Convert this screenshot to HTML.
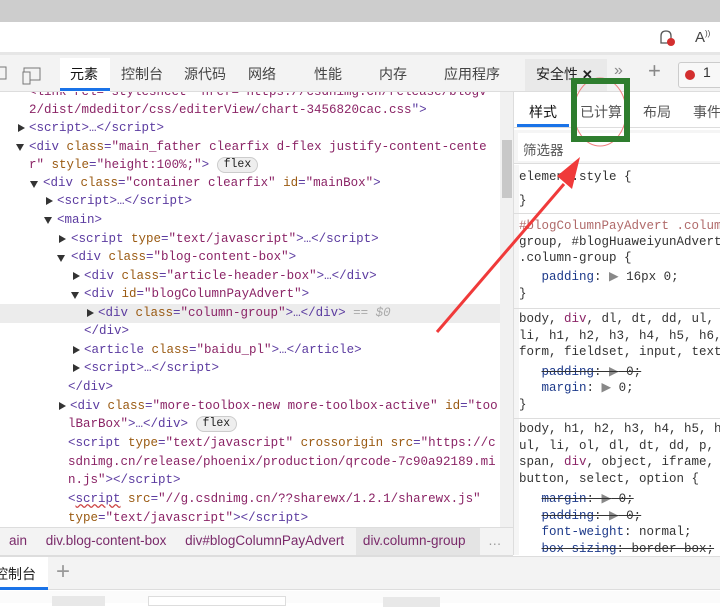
<!DOCTYPE html><html><head><meta charset="utf-8"><style>
*{margin:0;padding:0;box-sizing:border-box}
body{width:720px;height:603px;overflow:hidden;background:#fff;position:relative;font-family:"Liberation Sans","Noto Sans CJK SC",sans-serif}
.a{position:absolute}
.m{font-family:"Liberation Mono","DejaVu Sans Mono",monospace;font-size:12.5px;white-space:pre;line-height:18px}
.t{color:#5b3ba0}.n{color:#9a5a12}.v{color:#8b2466}.g{color:#333}
.tri{position:absolute;width:0;height:0}
.r{border-top:4.5px solid transparent;border-bottom:4.5px solid transparent;border-left:7px solid #333}
.d{border-left:4.5px solid transparent;border-right:4.5px solid transparent;border-top:7px solid #333}
.tab{position:absolute;top:64px;font-size:14px;color:#444;white-space:nowrap}
.pill{display:inline-block;background:#eee;border:1px solid #ccc;border-radius:9px;font-size:11.5px;line-height:14px;padding:0 6px;color:#222;vertical-align:1px}
.rs{position:absolute;left:519px;font-family:"Liberation Mono",monospace;font-size:12.5px;white-space:pre;line-height:16px;color:#333}
.s{text-decoration:line-through}
.p{color:#1d3a8a}
</style></head><body>
<div class="a" style="left:0;top:0;width:720px;height:22px;background:#cdcdcd"></div>
<div class="a" style="left:0;top:22px;width:720px;height:30px;background:#fff"></div>
<div class="a" style="left:0;top:52px;width:720px;height:3px;background:#e6e6e6"></div>
<svg class="a" style="left:656px;top:28px" width="24" height="20"><path d="M5 15 L5 8 Q5 3 10 3 Q15 3 15 8 L15 15 Z" fill="none" stroke="#555" stroke-width="1.3"/><circle cx="15" cy="14" r="4" fill="#d32f2f"/></svg>
<div class="a" style="left:695px;top:29px;font-size:15px;color:#444">A<sup style="font-size:8px">))</sup></div>
<!-- elements panel (clipped) -->
<div class="a" style="left:0;top:92px;width:500px;height:435px;overflow:hidden">
<div class="a" style="left:0;top:0;width:0;height:0">
<div class="a" style="left:0;top:212px;width:500px;height:19px;background:#ececec"></div>
<div class="m a" style="left:29px;top:-9px"><span class="v">&lt;link rel="stylesheet" href="https://csdnimg.cn/release/blogv</span></div>
<div class="m a" style="left:29px;top:9px"><span class="v">2/dist/mdeditor/css/editerView/chart-3456820cac.css</span><span class="t">"&gt;</span></div>
<div class="tri r" style="left:18px;top:32px"></div>
<div class="m a t" style="left:29px;top:27px">&lt;script&gt;…&lt;/script&gt;</div>
<div class="tri d" style="left:16px;top:52px"></div>
<div class="m a" style="left:29px;top:46px"><span class="t">&lt;div </span><span class="n">class</span><span class="t">=</span><span class="v">"main_father clearfix d-flex justify-content-cente</span></div>
<div class="m a" style="left:29px;top:64px"><span class="v">r"</span> <span class="n">style</span><span class="t">=</span><span class="v">"height:100%;"</span><span class="t">&gt;</span> <span class="pill">flex</span></div>
<div class="tri d" style="left:30px;top:89px"></div>
<div class="m a" style="left:43px;top:82px"><span class="t">&lt;div </span><span class="n">class</span><span class="t">=</span><span class="v">"container clearfix"</span> <span class="n">id</span><span class="t">=</span><span class="v">"mainBox"</span><span class="t">&gt;</span></div>
<div class="tri r" style="left:46px;top:105px"></div>
<div class="m a t" style="left:57px;top:100px">&lt;script&gt;…&lt;/script&gt;</div>
<div class="tri d" style="left:44px;top:125px"></div>
<div class="m a t" style="left:57px;top:119px">&lt;main&gt;</div>
<div class="tri r" style="left:59px;top:143px"></div>
<div class="m a" style="left:71px;top:138px"><span class="t">&lt;script </span><span class="n">type</span><span class="t">=</span><span class="v">"text/javascript"</span><span class="t">&gt;…&lt;/script&gt;</span></div>
<div class="tri d" style="left:57px;top:163px"></div>
<div class="m a" style="left:71px;top:156px"><span class="t">&lt;div </span><span class="n">class</span><span class="t">=</span><span class="v">"blog-content-box"</span><span class="t">&gt;</span></div>
<div class="tri r" style="left:73px;top:180px"></div>
<div class="m a" style="left:84px;top:175px"><span class="t">&lt;div </span><span class="n">class</span><span class="t">=</span><span class="v">"article-header-box"</span><span class="t">&gt;…&lt;/div&gt;</span></div>
<div class="tri d" style="left:71px;top:200px"></div>
<div class="m a" style="left:84px;top:193px"><span class="t">&lt;div </span><span class="n">id</span><span class="t">=</span><span class="v">"blogColumnPayAdvert"</span><span class="t">&gt;</span></div>
<div class="tri r" style="left:87px;top:217px"></div>
<div class="m a" style="left:98px;top:212px"><span class="t">&lt;div </span><span class="n">class</span><span class="t">=</span><span class="v">"column-group"</span><span class="t">&gt;…&lt;/div&gt;</span> <span style="color:#aaa;font-style:italic">== $0</span></div>
<div class="m a t" style="left:84px;top:230px">&lt;/div&gt;</div>
<div class="tri r" style="left:73px;top:254px"></div>
<div class="m a" style="left:84px;top:249px"><span class="t">&lt;article </span><span class="n">class</span><span class="t">=</span><span class="v">"baidu_pl"</span><span class="t">&gt;…&lt;/article&gt;</span></div>
<div class="tri r" style="left:73px;top:272px"></div>
<div class="m a t" style="left:84px;top:267px">&lt;script&gt;…&lt;/script&gt;</div>
<div class="m a t" style="left:68px;top:286px">&lt;/div&gt;</div>
<div class="tri r" style="left:59px;top:310px"></div>
<div class="m a" style="left:70px;top:305px"><span class="t">&lt;div </span><span class="n">class</span><span class="t">=</span><span class="v">"more-toolbox-new more-toolbox-active"</span> <span class="n">id</span><span class="t">=</span><span class="v">"too</span></div>
<div class="m a" style="left:68px;top:323px"><span class="v">lBarBox"</span><span class="t">&gt;…&lt;/div&gt;</span> <span class="pill">flex</span></div>
<div class="m a" style="left:68px;top:342px"><span class="t">&lt;script </span><span class="n">type</span><span class="t">=</span><span class="v">"text/javascript"</span> <span class="n">crossorigin</span> <span class="n">src</span><span class="t">=</span><span class="v">"https://c</span></div>
<div class="m a v" style="left:68px;top:361px">sdnimg.cn/release/phoenix/production/qrcode-7c90a92189.mi</div>
<div class="m a" style="left:68px;top:379px"><span class="v">n.js"</span><span class="t">&gt;&lt;/script&gt;</span></div>
<div class="m a" style="left:68px;top:398px"><span class="t">&lt;<span style="text-decoration:underline wavy #c44">script</span> </span><span class="n">src</span><span class="t">=</span><span class="v">"//g.csdnimg.cn/??sharewx/1.2.1/sharewx.js"</span></div>
<div class="m a" style="left:68px;top:417px"><span class="n">type</span><span class="t">=</span><span class="v">"text/javascript"</span><span class="t">&gt;&lt;/script&gt;</span></div>
</div></div>
<div class="a" style="left:500px;top:92px;width:14px;height:435px;background:#f1f1f1"></div>
<div class="a" style="left:502px;top:140px;width:10px;height:58px;background:#c8c8c8"></div>
<div class="a" style="left:513px;top:92px;width:1px;height:463px;background:#ddd"></div>
<!-- devtools tabbar -->
<div class="a" style="left:0;top:55px;width:720px;height:37px;background:#f3f3f3;border-bottom:1px solid #ddd"></div>
<svg class="a" style="left:0;top:64px" width="46" height="22"><rect x="-4" y="3" width="10" height="12" fill="none" stroke="#777"/><rect x="24" y="4" width="16" height="12" fill="none" stroke="#777"/><rect x="23" y="8" width="7" height="12" fill="#f3f3f3" stroke="#777"/></svg>
<div class="a" style="left:60px;top:58px;width:50px;height:34px;background:#fff"></div>
<div class="a" style="left:60px;top:88px;width:50px;height:3px;background:#1a73e8"></div>
<div class="tab" style="left:70px;color:#111">元素</div>
<div class="tab" style="left:121px">控制台</div>
<div class="tab" style="left:184px">源代码</div>
<div class="tab" style="left:248px">网络</div>
<div class="tab" style="left:314px">性能</div>
<div class="tab" style="left:379px">内存</div>
<div class="tab" style="left:444px">应用程序</div>
<div class="a" style="left:525px;top:59px;width:82px;height:32px;background:#e9e9e9"></div>
<div class="tab" style="left:536px;color:#222">安全性 <b style="font-size:13px">✕</b></div>
<div class="tab" style="left:614px;color:#888;font-size:16px;top:62px">»</div>
<div class="tab" style="left:648px;color:#888;font-size:22px;top:58px;font-weight:300">+</div>
<div class="a" style="left:678px;top:62px;width:50px;height:26px;border:1px solid #ccc;border-radius:3px;background:#f8f8f8"></div>
<div class="a" style="left:685px;top:70px;width:10px;height:10px;border-radius:5px;background:#d32f2f"></div>
<div class="tab" style="left:703px;color:#333">1</div>
<!-- breadcrumb -->
<div class="a" style="left:0;top:527px;width:513px;height:29px;background:#f3f3f3;border-top:1px solid #ddd;border-bottom:1px solid #ddd;overflow:hidden">
<div class="a" style="left:356px;top:0;width:124px;height:27px;background:#e4e4e4"></div>
<div class="a" style="left:9px;top:5px;font-size:13.5px;color:#7a2a6a;white-space:pre">ain     div.blog-content-box     div#blogColumnPayAdvert     div.column-group      <span style="color:#999">…</span></div>
</div>
<!-- drawer -->
<div class="a" style="left:0;top:556px;width:720px;height:34px;background:#f3f3f3;border-bottom:1px solid #ddd;border-top:1px solid #ddd"></div>
<div class="a" style="left:0;top:557px;width:48px;height:33px;background:#fff"></div>
<div class="a" style="left:0;top:587px;width:48px;height:3px;background:#1a73e8"></div>
<div class="a" style="left:-6px;top:564px;font-size:14px;color:#222">控制台</div>
<div class="a" style="left:56px;top:558px;font-size:24px;color:#999;font-weight:300">+</div>
<div class="a" style="left:0;top:591px;width:720px;height:12px;background:#fbfbfb"></div>
<div class="a" style="left:52px;top:596px;width:53px;height:10px;background:#e8e8e8"></div>
<div class="a" style="left:148px;top:596px;width:138px;height:10px;border:1px solid #ddd;background:#fff"></div>
<div class="a" style="left:383px;top:597px;width:57px;height:10px;background:#e8e8e8"></div>
<!-- right panel -->
<div class="a" style="left:514px;top:92px;width:206px;height:463px;overflow:hidden;background:#fff">
<div class="a" style="left:-514px;top:-92px;width:720px;height:603px">
<div class="a" style="left:514px;top:92px;width:206px;height:36px;background:#fff;border-bottom:1px solid #ddd"></div>
<div class="tab" style="left:529px;top:102px;color:#111">样式</div>
<div class="a" style="left:517px;top:124px;width:52px;height:3px;background:#1a73e8"></div>
<div class="tab" style="left:580px;top:102px;color:#555">已计算</div>
<div class="tab" style="left:643px;top:102px;color:#555">布局</div>
<div class="tab" style="left:693px;top:102px;color:#555">事件</div>
<div class="a" style="left:514px;top:130px;width:206px;height:34px;background:#f5f5f5;border-bottom:1px solid #ddd"></div>
<div class="a" style="left:518px;top:133px;width:202px;height:28px;background:#fff"></div>
<div class="a" style="left:523px;top:139px;font-size:13.5px;color:#555">筛选器</div>
<div class="a" style="left:514px;top:165px;width:5px;height:390px;background:#f5f5f5"></div>
<div class="rs" style="top:169px">element.style {</div>
<div class="rs" style="top:193px">}</div>
<div class="a" style="left:514px;top:213px;width:206px;height:1px;background:#ddd"></div>
<div class="rs" style="top:218px"><span style="color:#b06a6a">#blogColumnPayAdvert .colum</span>
group, #blogHuaweiyunAdvert
.column-group {</div>
<div class="rs" style="top:269px">   <span class="p">padding</span>: <span style="color:#888">▶</span> 16px 0;</div>
<div class="rs" style="top:286px">}</div>
<div class="a" style="left:514px;top:308px;width:206px;height:1px;background:#ddd"></div>
<div class="rs" style="top:311px;line-height:16.6px">body, <span class="v">div</span>, dl, dt, dd, ul,
li, h1, h2, h3, h4, h5, h6,
form, fieldset, input, text</div>
<div class="rs" style="top:364px">   <span class="s"><span class="p">padding</span>: <span style="color:#888">▶</span> 0;</span></div>
<div class="rs" style="top:380px">   <span class="p">margin</span>: <span style="color:#888">▶</span> 0;</div>
<div class="rs" style="top:397px">}</div>
<div class="a" style="left:514px;top:418px;width:206px;height:1px;background:#ddd"></div>
<div class="rs" style="top:421px;line-height:16.6px">body, h1, h2, h3, h4, h5, h
ul, li, ol, dl, dt, dd, p,
span, <span class="v">div</span>, object, iframe,
button, select, option {</div>
<div class="rs" style="top:491px;line-height:16.6px">   <span class="s"><span class="p">margin</span>: <span style="color:#888">▶</span> 0;</span>
   <span class="s"><span class="p">padding</span>: <span style="color:#888">▶</span> 0;</span>
   <span class="p">font-weight</span>: normal;
   <span class="s"><span class="p">box-sizing</span>: border-box;</span></div>
</div></div>
<!-- annotations -->
<svg class="a" style="left:0;top:0" width="720" height="603">
<ellipse cx="600" cy="112" rx="26" ry="34" fill="none" stroke="#f08080" stroke-width="1"/>
<rect x="574" y="81" width="53" height="58" fill="none" stroke="#2e7d2e" stroke-width="6"/>
<line x1="437" y1="332" x2="564" y2="184" stroke="#f03a3a" stroke-width="3"/>
<polygon points="580,157 557,176 572,189" fill="#f03a3a"/>
</svg>
</body></html>
